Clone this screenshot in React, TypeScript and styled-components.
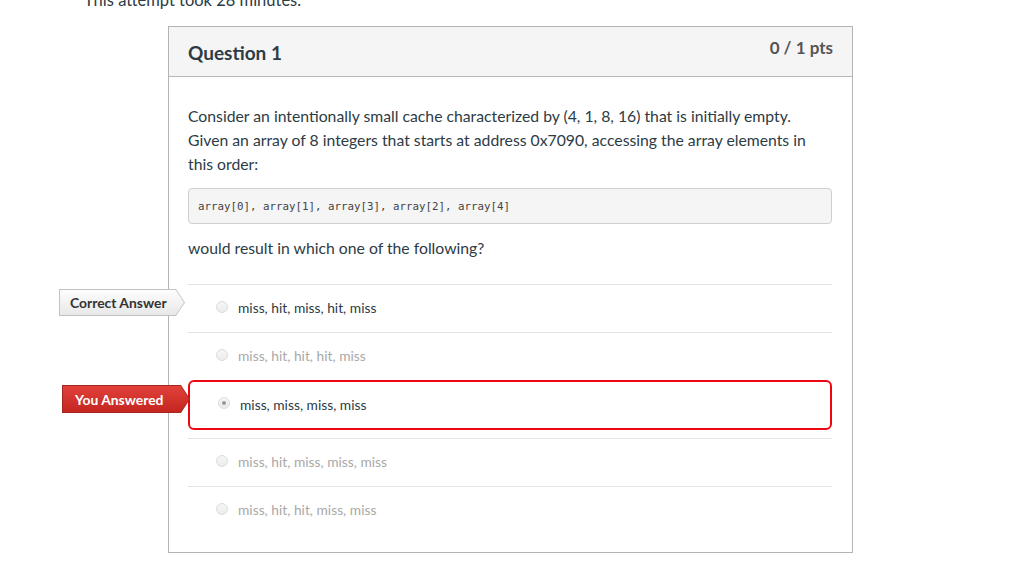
import React from "react";
import styled, { createGlobalStyle, css } from "styled-components";

const Global = createGlobalStyle`
  html, body { margin: 0; padding: 0; background: #fff; }
  body { font-family: Lato, "Open Sans", sans-serif; color: #2d3b45; }
  #root { width: 1024px; height: 578px; overflow: hidden; }
`;

const Page = styled.div`
  width: 1024px;
  height: 578px;
  overflow: hidden;
`;

const TopNote = styled.div`
  margin-top: -10px;
  padding-left: 84px;
  font-size: 16.5px;
  line-height: 20px;
  color: #2d3b45;
`;

const Card = styled.section`
  margin: 16px 0 0 168px;
  width: 683px;
  border: 1px solid #b3b3b3;
  background: #fff;
`;

const Header = styled.header`
  height: 49px;
  background: #f5f5f5;
  border-bottom: 1px solid #b8b8b8;
  display: flex;
  justify-content: space-between;
  align-items: flex-start;
  padding: 0 19px;
`;

const Title = styled.h2`
  margin: 14px 0 0;
  font-size: 19px;
  line-height: 24px;
  font-weight: 700;
  color: #2d3b45;
`;

const Points = styled.div`
  margin-top: 10px;
  font-size: 17px;
  line-height: 22px;
  font-weight: 700;
  color: #555;
`;

const Body = styled.div`
  padding: 27px 20px 18px 19px;
`;

const Text = styled.p`
  margin: 0;
  font-size: 15.75px;
  line-height: 24px;
  color: #2d3b45;
`;

const Code = styled.pre`
  margin: 12px 0;
  height: 34px;
  box-sizing: content-box;
  display: flex;
  align-items: center;
  padding: 0 9px;
  background: #f5f5f5;
  border: 1px solid #cfcfcf;
  border-radius: 4px;
  font-family: "DejaVu Sans Mono", monospace;
  font-size: 10.8px;
  color: #444;
`;

const Answers = styled.div`
  margin-top: 24px;
  display: flex;
  flex-direction: column;
`;

const Row = styled.div<{ $selected?: boolean; $muted?: boolean }>`
  position: relative;
  height: 47px;
  display: flex;
  align-items: center;
  gap: 10px;
  padding-left: 28px;
  border-top: 1px solid #e4e4e4;
  font-size: 13.8px;
  color: ${(p) => (p.$muted ? "#a9a9a9" : "#2d3b45")};
  ${(p) =>
    p.$selected &&
    css`
      height: 46px;
      border: 2px solid #ee0612;
      border-radius: 6px;
      margin-bottom: 8px;
    `}
`;

const Label = styled.span`
  margin-top: -2px;
`;

const Radio = styled.span<{ $checked?: boolean }>`
  flex: none;
  width: 10px;
  height: 10px;
  border-radius: 50%;
  border: 1px solid #dcdcdc;
  background: linear-gradient(#f6f6f6, #ececec);
  display: flex;
  align-items: center;
  justify-content: center;
  margin-top: -4px;
  &::after {
    content: "";
    width: 4px;
    height: 4px;
    border-radius: 50%;
    background: ${(p) => (p.$checked ? "#999" : "transparent")};
  }
`;

const Tag = styled.div<{ $red?: boolean; $left: number; $top: number; $w: number; $h: number }>`
  position: absolute;
  left: ${(p) => p.$left}px;
  top: ${(p) => p.$top}px;
  width: ${(p) => p.$w}px;
  height: ${(p) => p.$h}px;
  padding: 1px;
  box-sizing: border-box;
  background: ${(p) => (p.$red ? "#a52520" : "#c2c2c2")};
  clip-path: polygon(0 0, calc(100% - 9px) 0, 100% 50%, calc(100% - 9px) 100%, 0 100%);
`;

const TagInner = styled.div<{ $red?: boolean }>`
  width: 100%;
  height: 100%;
  display: flex;
  align-items: center;
  padding-left: ${(p) => (p.$red ? "12px" : "10px")};
  box-sizing: border-box;
  font-size: 13.9px;
  font-weight: 700;
  color: ${(p) => (p.$red ? "#fff" : "#333")};
  background: ${(p) =>
    p.$red ? "linear-gradient(#e2413b, #c4261f)" : "linear-gradient(#fdfdfd, #e8e8e8)"};
  clip-path: polygon(0 0, calc(100% - 8.3px) 0, 100% 50%, calc(100% - 8.3px) 100%, 0 100%);
`;

type Answer = { text: string; muted?: boolean; selected?: boolean; tag?: "correct" | "you" };

const answers: Answer[] = [
  { text: "miss, hit, miss, hit, miss", tag: "correct" },
  { text: "miss, hit, hit, hit, miss", muted: true },
  { text: "miss, miss, miss, miss", selected: true, tag: "you" },
  { text: "miss, hit, miss, miss, miss", muted: true },
  { text: "miss, hit, hit, miss, miss", muted: true },
];

export default function App() {
  return (
    <Page>
      <Global />
      <TopNote>This attempt took 28 minutes.</TopNote>
      <Card>
        <Header>
          <Title>Question 1</Title>
          <Points>0 / 1 pts</Points>
        </Header>
        <Body>
          <Text>
            Consider an intentionally small cache characterized by (4, 1, 8, 16) that is initially empty.
            Given an array of 8 integers that starts at address 0x7090, accessing the array elements in
            this order:
          </Text>
          <Code>array[0], array[1], array[3], array[2], array[4]</Code>
          <Text>would result in which one of the following?</Text>
          <Answers>
            {answers.map((a, i) => (
              <Row key={i} $selected={a.selected} $muted={a.muted}>
                {a.tag === "correct" && (
                  <Tag $left={-129} $top={4} $w={126} $h={27}>
                    <TagInner>Correct Answer</TagInner>
                  </Tag>
                )}
                {a.tag === "you" && (
                  <Tag $red $left={-128} $top={3} $w={128} $h={28}>
                    <TagInner $red>You Answered</TagInner>
                  </Tag>
                )}
                <Radio $checked={a.selected} />
                <Label>{a.text}</Label>
              </Row>
            ))}
          </Answers>
        </Body>
      </Card>
    </Page>
  );
}
